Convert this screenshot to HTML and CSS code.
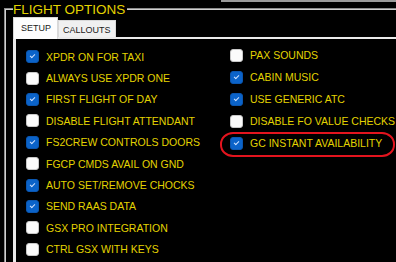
FILE: index.html
```html
<!DOCTYPE html>
<html>
<head>
<meta charset="utf-8">
<link rel="stylesheet" href="styles.css">
</head>
<body>
<div class="topline"></div>
<section class="group">
  <div class="head">
    <span class="corner"></span>
    <span class="legend">FLIGHT OPTIONS</span>
    <span class="line"></span>
  </div>
  <div class="body">
    <div class="tabs">
      <div class="tab active">SETUP</div>
      <div class="tab">CALLOUTS</div>
    </div>
    <div class="panel">
      <div class="col">
        <label class="row"><span class="cb on"></span>XPDR ON FOR TAXI</label>
        <label class="row"><span class="cb"></span>ALWAYS USE XPDR ONE</label>
        <label class="row"><span class="cb on"></span>FIRST FLIGHT OF DAY</label>
        <label class="row"><span class="cb"></span>DISABLE FLIGHT ATTENDANT</label>
        <label class="row"><span class="cb on"></span>FS2CREW CONTROLS DOORS</label>
        <label class="row"><span class="cb"></span>FGCP CMDS AVAIL ON GND</label>
        <label class="row"><span class="cb on"></span>AUTO SET/REMOVE CHOCKS</label>
        <label class="row"><span class="cb on"></span>SEND RAAS DATA</label>
        <label class="row"><span class="cb"></span>GSX PRO INTEGRATION</label>
        <label class="row"><span class="cb"></span>CTRL GSX WITH KEYS</label>
      </div>
      <div class="col right">
        <label class="row"><span class="cb"></span>PAX SOUNDS</label>
        <label class="row"><span class="cb on"></span>CABIN MUSIC</label>
        <label class="row"><span class="cb on"></span>USE GENERIC ATC</label>
        <label class="row"><span class="cb"></span>DISABLE FO VALUE CHECKS</label>
        <label class="row hl"><span class="cb on"></span>GC INSTANT AVAILABILITY<span class="ring"></span></label>
      </div>
    </div>
  </div>
</section>
</body>
</html>
```
FILE: styles.css
```css
html, body {
  margin: 0;
  padding: 0;
  background: #000;
  width: 396px;
  height: 262px;
  overflow: hidden;
  font-family: "Liberation Sans", Arial, sans-serif;
}
.topline {
  height: 2px;
  margin-left: 221px;
  background: #9a9a9a;
}
.group {
  margin-left: 4px;
}
.head {
  display: flex;
  height: 15px;
}
.corner {
  flex: 0 0 8px;
  margin-top: 6px;
  border-top: 1px solid #8c8c8c;
  border-left: 1px solid #8c8c8c;
  box-shadow: inset 1px 1px 0 #d0d0d0;
}
.legend {
  margin-top: 1px;
  padding: 0 2px 0 0;
  color: #e3d300;
  font-size: 13.5px;
  line-height: 14px;
  white-space: nowrap;
}
.line {
  flex: 1;
  margin-top: 6px;
  border-top: 1px solid #8c8c8c;
  box-shadow: inset 0 1px 0 #d0d0d0;
  height: 1px;
}
.body {
  border-left: 1px solid #8c8c8c;
  box-shadow: inset 1px 0 0 #d0d0d0;
  padding-left: 8px;
  height: 245px;
}
.tabs {
  display: flex;
  align-items: flex-end;
  height: 20px;
  position: relative;
  z-index: 1;
}
.tab {
  background: #f0f0f0;
  color: #1a1a1a;
  font-size: 9px;
  height: 16px;
  line-height: 18px;
  padding: 0 4px 0 4px;
  border: 1px solid #d9d9d9;
  border-bottom: none;
}
.tab.active {
  background: #fdfdfd;
  height: 21px;
  line-height: 20px;
  padding: 0 6px 0 7px;
  margin-bottom: -2px;
}
.panel {
  display: flex;
  border-top: 2px solid #eaeaea;
  border-left: 3px solid #eaeaea;
  padding: 7px 0 0 10px;
  height: 220px;
}
.col {
  display: flex;
  flex-direction: column;
  width: 204px;
}
.col.right {
  margin-top: -2px;
  width: 160px;
}
.row {
  display: flex;
  align-items: center;
  height: 21.4px;
  flex: none;
  color: #e3d300;
  font-size: 10.5px;
  white-space: nowrap;
}
.right .row {
  height: 22px;
}
.cb {
  width: 11px;
  height: 11px;
  border: 1px solid #c8c8c8;
  border-radius: 3px;
  background: #fbfbfb;
  margin-right: 7px;
  flex: none;
  position: relative;
}
.cb.on {
  background: #0b63c9;
  border-color: #0a56b0;
}
.cb.on::after {
  content: "";
  position: absolute;
  left: 3px;
  top: 3px;
  width: 4px;
  height: 2px;
  border-left: 1px solid #cfe2ff;
  border-bottom: 1px solid #cfe2ff;
  transform: rotate(-45deg);
}
.hl {
  position: relative;
}
.ring {
  position: absolute;
  left: -10px;
  top: 0;
  width: 171px;
  height: 21px;
  border: 2px solid #e3141e;
  border-radius: 13px / 12px;
}
```
